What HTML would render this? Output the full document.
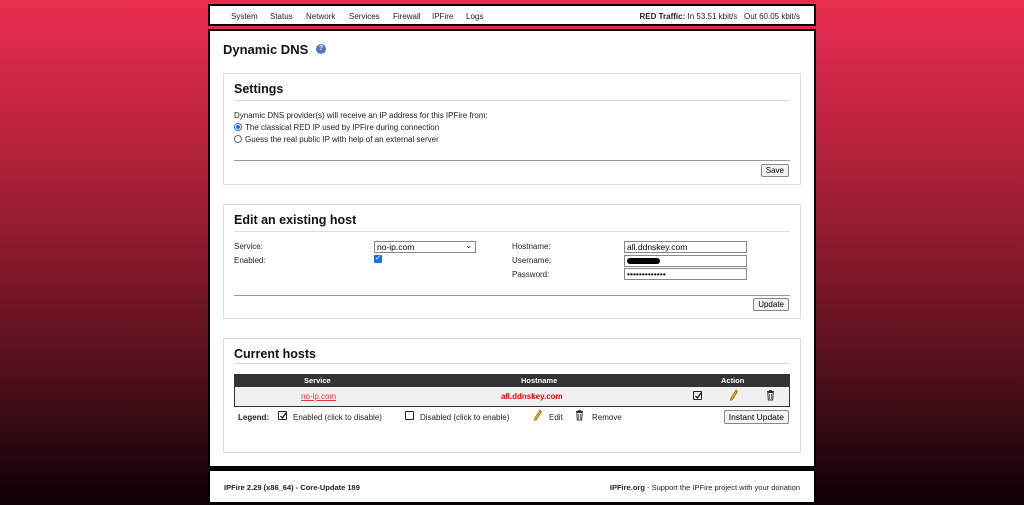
<!DOCTYPE html>
<html><head><meta charset="utf-8"><style>
*{margin:0;padding:0;box-sizing:border-box}
body{width:1024px;height:505px;overflow:hidden;background:linear-gradient(#ec2d50,#a01e34 40%,#4e0f1a 75%,#0d0006);font-family:"Liberation Sans",sans-serif;color:#222;position:relative;font-size:8px}
.box{position:absolute;background:#fff;border:2px solid #000}
.a{position:absolute;white-space:nowrap}
.sec{position:absolute;left:223px;width:578px;border:1px solid #ddd;background:#fff}
.sec h2{position:absolute;left:10px;top:8px;font-size:12.5px;font-weight:bold;color:#111}
.sec .hl{position:absolute;left:10px;right:10px;height:1px;background:#ddd}
.btn{position:absolute;border:1px solid #888;background:#f3f3f3;font-size:8px;padding:1px 4px;border-radius:2px;color:#000}
.inp{position:absolute;border:1px solid #888;background:#fff;height:12px;font-size:8.5px;padding-left:2px;line-height:10px;color:#000}
.rad{position:absolute;width:8px;height:8px;border-radius:50%;border:1px solid #666;background:#fff}
.cb{position:absolute;width:9px;height:9px;border:1px solid #222;border-radius:1px}
.cb svg{position:absolute;left:0;top:0}
</style></head><body>
<div class="box" style="left:208px;top:4px;width:608px;height:22px">
<div class="a" style="left:21px;top:6px">System</div>
<div class="a" style="left:60px;top:6px">Status</div>
<div class="a" style="left:96px;top:6px">Network</div>
<div class="a" style="left:139px;top:6px">Services</div>
<div class="a" style="left:183px;top:6px">Firewall</div>
<div class="a" style="left:222px;top:6px">IPFire</div>
<div class="a" style="left:256px;top:6px">Logs</div>
<div class="a" style="right:14px;top:6px"><b>RED Traffic:</b> In 53.51 kbit/s &nbsp; Out 60.05 kbit/s</div>
</div>
<div class="box" style="left:208px;top:29px;width:608px;height:439px"></div>
<div class="a" style="left:223px;top:42px;font-size:13px;font-weight:bold;color:#111">Dynamic DNS</div>
<div class="a" style="left:316px;top:44px;width:10px;height:10px;border-radius:50%;background:#4a78b8;color:#fff;font-size:7px;text-align:center;line-height:10px;font-weight:bold">?</div>

<div class="sec" style="top:73px;height:112px">
<h2>Settings</h2><div class="hl" style="top:26px"></div>
<div class="a" style="left:10px;top:37px">Dynamic DNS provider(s) will receive an IP address for this IPFire from:</div>
<div class="rad" style="left:10px;top:49px;border-color:#1a73e8;background:radial-gradient(#1a73e8 45%,#fff 50%)"></div>
<div class="a" style="left:21px;top:49px">The classical RED IP used by IPFire during connection</div>
<div class="rad" style="left:10px;top:61px"></div>
<div class="a" style="left:21px;top:61px">Guess the real public IP with help of an external server</div>
<div class="hl" style="top:86px;background:#999"></div>
<div class="btn" style="right:11px;top:90px">Save</div>
</div>

<div class="sec" style="top:204px;height:115px">
<h2>Edit an existing host</h2><div class="hl" style="top:26px"></div>
<div class="a" style="left:10px;top:37px">Service:</div>
<div class="a" style="left:10px;top:51px">Enabled:</div>
<div class="inp" style="left:150px;top:36px;width:102px">no-ip.com<span style="position:absolute;right:3px;top:-1px;font-size:8px">⌄</span></div>
<div class="a" style="left:150px;top:50px;width:8px;height:8px;background:#1a73e8;border-radius:1px;color:#fff;font-size:7px;line-height:8px;text-align:center">✓</div>
<div class="a" style="left:288px;top:37px">Hostname:</div>
<div class="a" style="left:288px;top:51px">Username:</div>
<div class="a" style="left:288px;top:65px">Password:</div>
<div class="inp" style="left:400px;top:36px;width:123px">all.ddnskey.com</div>
<div class="inp" style="left:400px;top:50px;width:123px"><span style="position:absolute;left:2px;top:2px;width:33px;height:6px;background:#000;border-radius:3px"></span></div>
<div class="inp" style="left:400px;top:63px;width:123px">•••••••••••••</div>
<div class="hl" style="top:90px;background:#999"></div>
<div class="btn" style="right:11px;top:93px">Update</div>
</div>

<div class="sec" style="top:338px;height:115px">
<h2>Current hosts</h2><div class="hl" style="top:24px"></div>
<div class="a" style="left:10px;top:35px;width:556px;height:33px;border:1px solid #333;background:#f0f0f0"></div>
<div class="a" style="left:10px;top:35px;width:556px;height:13px;background:#333;color:#fff;font-weight:bold;font-size:7.5px">
<span class="a" style="left:70px;top:2px">Service</span><span class="a" style="left:287px;top:2px">Hostname</span><span class="a" style="left:487px;top:2px">Action</span></div>
<div class="a" style="left:77px;top:53px;color:#e33;text-decoration:underline">no-ip.com</div>
<div class="a" style="left:277px;top:53px;color:#e00;font-weight:bold">all.ddnskey.com</div>
<div class="cb" style="left:469px;top:52px"><svg width="8" height="8"><path d="M1.5 4l2 2 3.5-5" fill="none" stroke="#000" stroke-width="1.2"/></svg></div>
<svg class="a" style="left:505px;top:50px" width="9" height="13"><path d="M7 1l1.5 1.5-5 8-2 1 .3-2.3z" fill="#e8b800" stroke="#6a4a00" stroke-width=".6"/></svg>
<svg class="a" style="left:542px;top:50px" width="9" height="12"><path d="M1 2.5h7M3.5 2.5v-1h2v1M1.8 3.5l.5 7.5h4.4l.5-7.5z" fill="none" stroke="#333" stroke-width="1"/><path d="M3.5 5v5M5.5 5v5" stroke="#333" stroke-width=".7"/></svg>
<div class="a" style="left:14px;top:74px;font-weight:bold">Legend:</div>
<div class="cb" style="left:54px;top:72px"><svg width="8" height="8"><path d="M1.5 4l2 2 3.5-5" fill="none" stroke="#000" stroke-width="1.2"/></svg></div>
<div class="a" style="left:69px;top:74px">Enabled (click to disable)</div>
<div class="cb" style="left:181px;top:72px"></div>
<div class="a" style="left:196px;top:74px">Disabled (click to enable)</div>
<svg class="a" style="left:309px;top:70px" width="9" height="13"><path d="M7 1l1.5 1.5-5 8-2 1 .3-2.3z" fill="#e8b800" stroke="#6a4a00" stroke-width=".6"/></svg>
<div class="a" style="left:325px;top:74px">Edit</div>
<svg class="a" style="left:351px;top:70px" width="9" height="12"><path d="M1 2.5h7M3.5 2.5v-1h2v1M1.8 3.5l.5 7.5h4.4l.5-7.5z" fill="none" stroke="#333" stroke-width="1"/><path d="M3.5 5v5M5.5 5v5" stroke="#333" stroke-width=".7"/></svg>
<div class="a" style="left:368px;top:74px">Remove</div>
<div class="btn" style="right:11px;top:71px;font-size:8.5px">Instant Update</div>
</div>

<div class="box" style="left:208px;top:469px;width:608px;height:35px">
<div class="a" style="left:14px;top:12px;font-weight:bold;font-size:7.5px">IPFire 2.29 (x86_64) - Core-Update 189</div>
<div class="a" style="right:14px;top:12px;font-size:7.5px"><b>IPFire.org</b> - Support the IPFire project with your donation</div>
</div>
</body></html>
